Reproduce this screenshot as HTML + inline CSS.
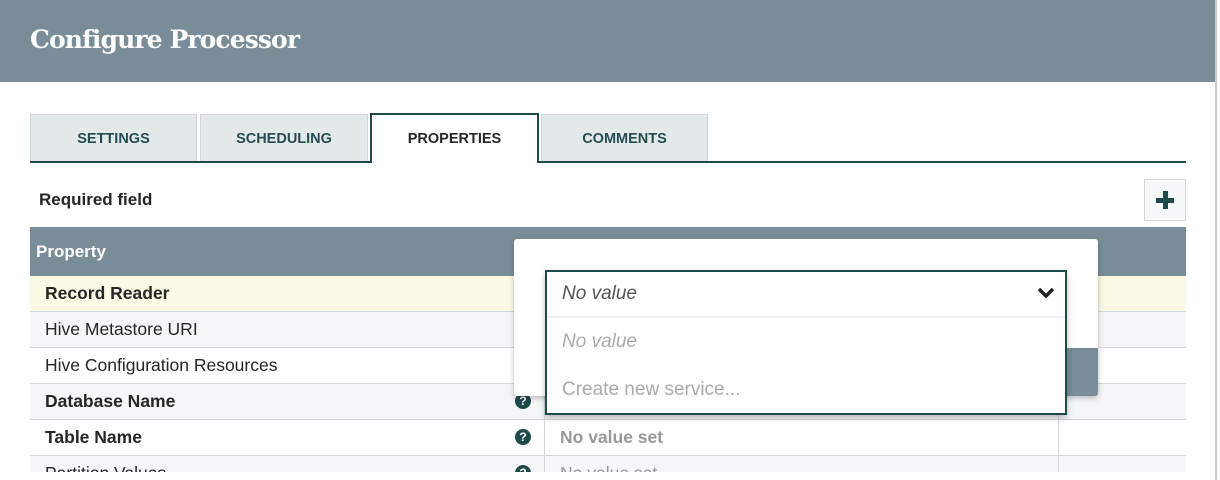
<!DOCTYPE html>
<html><head><style>
*{margin:0;padding:0;box-sizing:border-box}
html,body{width:1220px;height:480px;overflow:hidden}
body{background:#fff;font-family:"Liberation Sans",sans-serif;position:relative}
.hdr{position:absolute;left:0;top:0;width:1216px;height:82px;background:#798d99}
.hdr h1{position:absolute;left:30px;top:25px;font-family:"DejaVu Serif","Liberation Serif",serif;font-size:25px;color:#fff;font-weight:bold;letter-spacing:-0.9px}
.vline{position:absolute;left:1215px;top:0;width:2px;height:480px;background:#c6ccd0}
.tab{position:absolute;top:114px;height:48px;background:#e3e8eb;border:1px solid #cfd6da;color:#264d4f;font-size:14.5px;font-weight:bold;text-align:center;line-height:48px}
.tabline{position:absolute;left:30px;top:161px;width:1156px;height:2px;background:#1f4a4c}
.tab.act{background:#fff;border:2px solid #1f4a4c;border-bottom:none;height:50px;top:113px;color:#262626;z-index:2;line-height:48px}
.req{position:absolute;left:39px;top:190px;font-size:17px;font-weight:bold;color:#262626}
.plus{position:absolute;left:1144px;top:179px;width:42px;height:42px;border:1px solid #cfd6da;background:#f6f8f9}
.plus:before{content:"";position:absolute;left:11px;top:18px;width:18px;height:5px;background:#1f4a4c}
.plus:after{content:"";position:absolute;left:18px;top:11px;width:5px;height:18px;background:#1f4a4c}
.clip{position:absolute;left:0;top:0;width:1215px;height:472px;overflow:hidden}
.thead{position:absolute;left:30px;top:227px;width:1156px;height:49px;background:#798d99;color:#fff;font-weight:bold;font-size:17px;padding:15px 6px}
.row{position:absolute;left:30px;width:1156px;height:36px;border-bottom:1px solid #d1d9dc;font-size:17.5px;color:#262626;padding:7px 15px}
.b{font-weight:bold}
.q{position:absolute;left:485px;top:9px;width:16px;height:16px;border-radius:50%;background:#1f4a4c;color:#fff;font-size:12px;font-weight:bold;text-align:center;line-height:16px}
.c1{position:absolute;left:514px;top:0;width:1px;height:36px;background:#d1d9dc}
.c2{position:absolute;left:1028px;top:0;width:1px;height:36px;background:#d1d9dc}
.nv{position:absolute;left:530px;top:7px;color:#999;font-weight:bold}
.pop{position:absolute;left:514px;top:239px;width:584px;height:157px;background:#fff;border-radius:3px;box-shadow:0 2px 6px rgba(0,0,0,.25)}
.btn{position:absolute;left:1040px;top:348px;width:58px;height:48px;background:#798d99;border-radius:0 0 3px 0}
.dd{position:absolute;left:545px;top:270px;width:522px;height:145px;background:#fff;border:2px solid #1f4a4c;box-shadow:0 3px 6px rgba(0,0,0,.25);font-size:19px}
.dd .sel{height:46px;border-bottom:2px solid #f0f0f0;padding:11px 15px;font-style:italic;color:#555}
.dd .o{padding:0 15px;color:#aaa;height:48px;line-height:48px}
.chev{position:absolute;right:10px;top:14px}
</style></head><body>
<div class="hdr"><h1>Configure Processor</h1></div>
<div class="vline"></div>
<div class="tab" style="left:30px;width:167px">SETTINGS</div>
<div class="tab" style="left:200px;width:168px">SCHEDULING</div>
<div class="tab" style="left:541px;width:167px">COMMENTS</div>
<div class="tabline"></div>
<div class="tab act" style="left:370px;width:169px">PROPERTIES</div>
<div class="req">Required field</div>
<div class="plus"></div>
<div class="clip">
<div class="thead">Property</div>
<div class="row b" style="top:276px;background:#fcf9e4">Record Reader</div>
<div class="row" style="top:312px;background:#f4f6f7">Hive Metastore URI</div>
<div class="row" style="top:348px;background:#fff">Hive Configuration Resources</div>
<div class="row b" style="top:384px;background:#f4f6f7">Database Name<span class="q">?</span><span class="c1"></span><span class="c2"></span></div>
<div class="row b" style="top:420px;background:#fff">Table Name<span class="q">?</span><span class="c1"></span><span class="c2"></span><span class="nv">No value set</span></div>
<div class="row" style="top:456px;background:#f4f6f7">Partition Values<span class="q">?</span><span class="c1"></span><span class="c2"></span><span class="nv" style="font-weight:normal">No value set</span></div>
<div class="pop"></div>
<div class="btn"></div>
<div class="dd">
<div class="sel">No value<svg class="chev" width="18" height="14" viewBox="0 0 18 14"><path d="M2 3 L9 10 L16 3" stroke="#222" stroke-width="3.5" fill="none"/></svg></div>
<div class="o" style="font-style:italic">No value</div>
<div class="o">Create new service...</div>
</div>
</div>
</body></html>
